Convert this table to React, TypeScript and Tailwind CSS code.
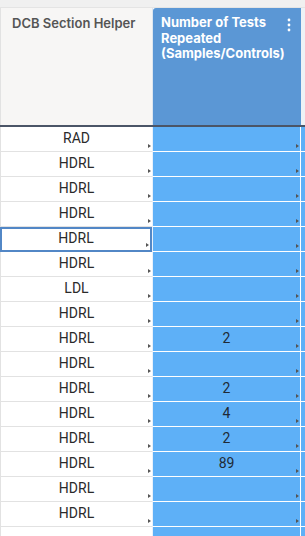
import React from "react";

type Row = { section: string; repeated?: string };

const rows: Row[] = [
  { section: "RAD" },
  { section: "HDRL" },
  { section: "HDRL" },
  { section: "HDRL" },
  { section: "HDRL" },
  { section: "HDRL" },
  { section: "LDL" },
  { section: "HDRL" },
  { section: "HDRL", repeated: "2" },
  { section: "HDRL" },
  { section: "HDRL", repeated: "2" },
  { section: "HDRL", repeated: "4" },
  { section: "HDRL", repeated: "2" },
  { section: "HDRL", repeated: "89" },
  { section: "HDRL" },
  { section: "HDRL" },
  { section: "" },
];

const SELECTED = 4;

// tiny dropdown marker in the bottom-right corner of each cell
function Marker() {
  return (
    <span className="absolute right-[1px] bottom-[3px] w-0 h-0 border-y-[2px] border-y-transparent border-l-[3px] border-l-[#555]" />
  );
}

function Kebab() {
  return (
    <svg width="4" height="14" viewBox="0 0 4 14" className="mt-[3px]">
      <circle cx="2" cy="2" r="1.4" fill="#fff" />
      <circle cx="2" cy="7" r="1.4" fill="#fff" />
      <circle cx="2" cy="12" r="1.4" fill="#fff" />
    </svg>
  );
}

export default function App() {
  return (
    <div className="w-[305px] h-[536px] overflow-hidden bg-white font-['Roboto',sans-serif]">
      {/* toolbar strip */}
      <div className="h-[8px] bg-[#f0f0f0] border-b border-[#e4e4e4]" />

      {/* column headers */}
      <div className="flex h-[119px] border-b-2 border-[#4b5567] font-['Inter',sans-serif]">
        <div className="w-[152px] shrink-0 bg-[#f7f6f5] border-l border-[#e2e2e2] pl-[11px] pt-[7px]">
          <p className="text-[13px] font-semibold text-[#555] leading-[16px]">DCB Section Helper</p>
        </div>
        <div className="w-px bg-[#dde6f0]" />
        <div className="w-[148px] shrink-0 bg-[#5b97d5] rounded-tl-[3px] flex pl-[8px] pr-[10px] pt-[7px]">
          <p className="flex-1 text-[13px] font-bold text-white leading-[15.5px]">
            Number of Tests Repeated (Samples/Controls)
          </p>
          <Kebab />
        </div>
        <div className="flex-1 bg-[#eef2f6]" />
      </div>

      {/* data rows */}
      {rows.map((row, i) => (
        <div key={i} className="flex h-[25px]">
          <div
            className={
              i === SELECTED
                ? "relative w-[152px] shrink-0 border-2 border-[#5287c6] text-center text-[14px] text-[#2a2a2a] leading-[19px]"
                : "relative w-[152px] shrink-0 border-b border-l border-[#e2e2e2] text-center text-[14px] text-[#2a2a2a] leading-[21px] pt-[1px]"
            }
          >
            {row.section}
            <Marker />
          </div>
          <div className="w-px bg-[#e8f1fb]" />
          <div className="relative w-[147px] shrink-0 bg-[#5eb0f7] border-b border-white text-center text-[14px] text-[#1f2a36] leading-[21px] pt-[1px]">
            {row.repeated}
            <Marker />
          </div>
          <div className="w-px bg-white" />
          <div className="flex-1 bg-[#5eb0f7] border-b border-white" />
        </div>
      ))}
    </div>
  );
}
